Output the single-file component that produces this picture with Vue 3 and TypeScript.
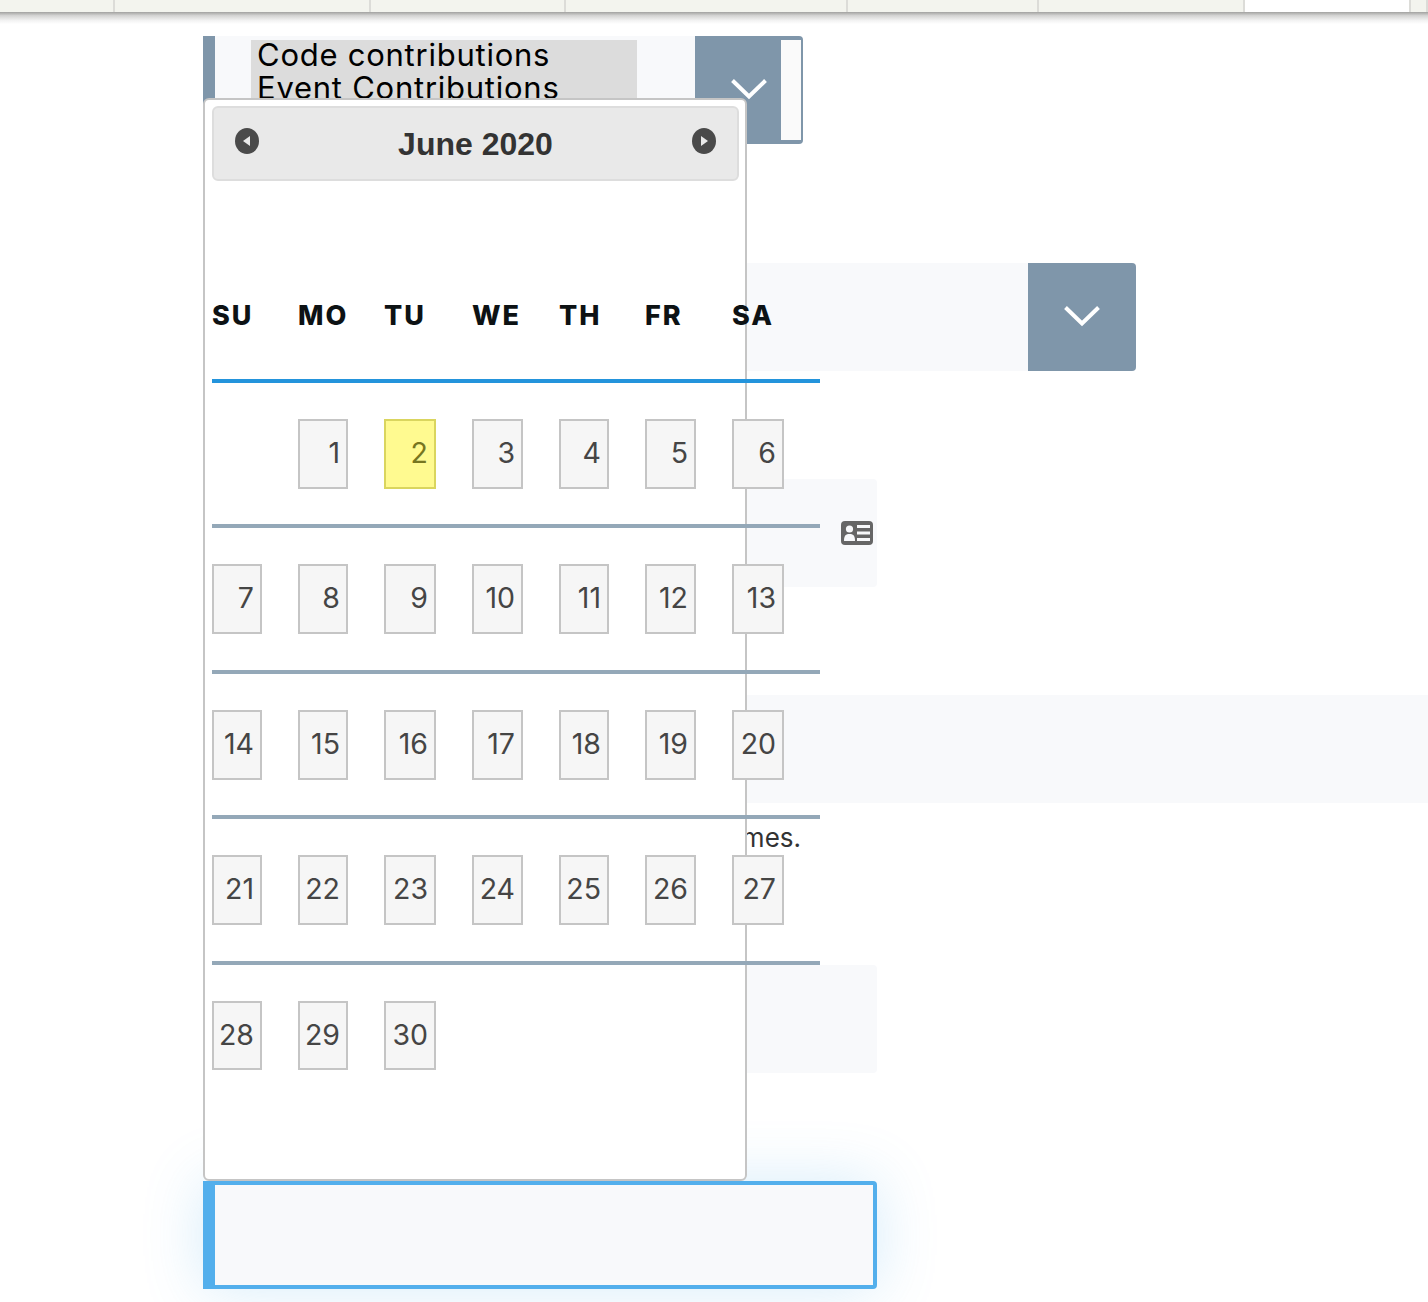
<script setup lang="ts">
const tabs = [115, 256, 195, 282, 191, 206, 166, 17]
const heads = ['SU', 'MO', 'TU', 'WE', 'TH', 'FR', 'SA']
const weeks: (number | null)[][] = [
  [null, 1, 2, 3, 4, 5, 6],
  [7, 8, 9, 10, 11, 12, 13],
  [14, 15, 16, 17, 18, 19, 20],
  [21, 22, 23, 24, 25, 26, 27],
  [28, 29, 30, null, null, null, null],
]
</script>

<template>
  <div class="page">
    <div class="tabbar">
      <div
        v-for="(w, i) in tabs"
        :key="i"
        class="tab"
        :class="{ active: i === 6 }"
        :style="{ width: w + 'px' }"
      ></div>
    </div>

    <div class="form">
      <div class="field first">
        <div class="listwrap">
          <div class="listbox">
            <div>Code contributions</div>
            <div>Event Contributions</div>
          </div>
        </div>
        <div class="arrow">
          <svg class="chev" viewBox="0 0 36 22" width="36" height="22">
            <path d="M1.5 2.5 L18 18.5 L34.5 2.5" fill="none" stroke="#fff" stroke-width="4" />
          </svg>
          <div class="scrollbar"></div>
        </div>
      </div>

      <div class="field second">
        <div class="arrow plain">
          <svg class="chev" viewBox="0 0 36 22" width="36" height="22">
            <path d="M1.5 2.5 L18 18.5 L34.5 2.5" fill="none" stroke="#fff" stroke-width="4" />
          </svg>
        </div>
      </div>

      <div class="field third">
        <svg class="card" viewBox="0 0 32 24" width="32" height="24">
          <rect width="32" height="24" rx="4" fill="#666" />
          <circle cx="8.5" cy="8" r="3.6" fill="#f8f9fb" />
          <path d="M3 20 C3 14 5 13 8.5 13 C12 13 14 14 14 20 Z" fill="#f8f9fb" />
          <rect x="16" y="4" width="13" height="3" fill="#f8f9fb" />
          <rect x="16" y="10.5" width="13" height="3" fill="#f8f9fb" />
          <rect x="16" y="17" width="13" height="3" fill="#f8f9fb" />
        </svg>
      </div>

      <div class="field fourth"></div>
      <p class="hint">names.</p>
      <div class="field fifth"></div>
      <div class="field focused"></div>
    </div>

    <div class="picker">
      <div class="header">
        <svg class="nav" viewBox="0 0 24 26" width="24" height="26">
          <ellipse cx="12" cy="13" rx="12" ry="13" fill="#4a4a4a" />
          <path d="M15 8 L8 13 L15 18 Z" fill="#e9e9e9" />
        </svg>
        <div class="title">June 2020</div>
        <svg class="nav" viewBox="0 0 24 26" width="24" height="26">
          <ellipse cx="12" cy="13" rx="12" ry="13" fill="#4a4a4a" />
          <path d="M9 8 L16 13 L9 18 Z" fill="#e9e9e9" />
        </svg>
      </div>
      <div class="calendar">
        <div class="heads row">
          <div v-for="h in heads" :key="h" class="head">{{ h }}</div>
        </div>
        <div v-for="(week, w) in weeks" :key="w" class="row week">
          <div v-for="(d, i) in week" :key="i" class="slot">
            <div v-if="d" class="day" :class="{ today: d === 2 }">{{ d }}</div>
          </div>
        </div>
      </div>
    </div>
  </div>
</template>

<style>
html, body { margin: 0; background: #fff; }
</style>

<style scoped>
.page {
  position: relative;
  width: 1428px;
  height: 1302px;
  overflow: hidden;
  background: #fff;
  font-family: Inter, "Open Sans", sans-serif;
}
.tabbar {
  display: flex;
  height: 12px;
  background: #f3f4ee;
  position: relative;
}
.tabbar::after {
  content: "";
  position: absolute;
  left: 0;
  right: 0;
  top: 12px;
  height: 12px;
  background: linear-gradient(#a2a2a0, #d4d4d3 30%, #f2f2f2 70%, #fff);
}
.tab {
  flex: none;
  box-sizing: border-box;
  height: 12px;
  border-right: 2px solid #dcdcd8;
}
.tab.active { background: #fff; }
.form { padding: 24px 0 0 203px; }
.field {
  box-sizing: border-box;
  height: 108px;
  width: 674px;
  background: #f8f9fb;
  border-radius: 0 4px 4px 0;
  display: flex;
  justify-content: flex-end;
  margin-bottom: 108px;
}
.first {
  width: 600px;
  margin-bottom: 119px;
  border-left: 12px solid #7f96aa;
  justify-content: space-between;
}
.listwrap { padding: 4px 0 0 36px; }
.listbox {
  display: flow-root;
  width: 386px;
  height: 96px;
  box-sizing: border-box;
  padding-left: 6px;
  background: #dcdcdc;
  color: #000;
  font-size: 31px;
  line-height: 33px;
  letter-spacing: 0.75px;
  white-space: nowrap;
}
.listbox div:first-child { margin-top: -2px; }
.arrow {
  position: relative;
  width: 108px;
  height: 108px;
  background: #7f96aa;
  border-radius: 0 4px 4px 0;
  display: flex;
  align-items: center;
  justify-content: center;
}
.chev { margin-top: -2px; }
.scrollbar {
  position: absolute;
  top: 4px;
  right: 2px;
  bottom: 4px;
  width: 20px;
  background: #fafafa;
}
.second { width: 933px; }
.third { align-items: center; padding-right: 4px; }
.fourth { width: 1225px; border-radius: 0; margin-bottom: 0; }
.hint {
  margin: 0;
  width: 598px;
  height: 162px;
  padding-top: 20px;
  box-sizing: border-box;
  font-size: 26px;
  line-height: 30px;
  color: #333;
  text-align: right;
  white-space: nowrap;
}
.fifth { margin-bottom: 108px; }
.focused {
  border: 4px solid #53afec;
  border-left-width: 12px;
  box-shadow: 0 0 60px rgba(83, 175, 236, 0.24);
  margin-bottom: 0;
}
.picker {
  position: absolute;
  left: 203px;
  top: 98px;
  box-sizing: border-box;
  width: 544px;
  height: 1083px;
  padding: 6px 6px 0 7px;
  background: #fff;
  border: 2px solid #c5c5c5;
  border-radius: 6px;
}
.header {
  box-sizing: border-box;
  width: 527px;
  height: 75px;
  padding: 0 21px;
  background: #e9e9e9;
  border: 2px solid #ddd;
  border-radius: 6px;
  display: flex;
  align-items: flex-start;
  justify-content: space-between;
}
.nav { margin-top: 20px; filter: blur(0.6px); }
.title {
  font-family: "Liberation Sans", Arial, sans-serif;
  font-weight: 700;
  font-size: 32px;
  line-height: 72px;
  color: #333;
}
.calendar { width: 608px; }
.row {
  display: grid;
  grid-template-columns: 86px 86px 88px 87px 86px 87px 88px;
}
.heads {
  height: 202px;
  align-items: start;
  box-sizing: border-box;
  border-bottom: 4px solid #2394dc;
}
.head {
  margin-top: 117px;
  font-size: 27px;
  line-height: 36px;
  font-weight: 800;
  letter-spacing: 2px;
  color: #0d1214;
}
.week {
  box-sizing: border-box;
  height: 145.4px;
  padding-top: 36px;
  border-bottom: 4px solid #94a8b8;
}
.week:last-child { border-bottom: 0; }
.slot { padding-right: 36px; }
.day {
  box-sizing: border-box;
  height: 69.8px;
  padding-right: 6px;
  background: #f6f6f6;
  border: 2px solid #c5c5c5;
  color: #454545;
  font-size: 28.5px;
  line-height: 63px;
  text-align: right;
  white-space: nowrap;
}
.today {
  background: #fffa90;
  border-color: #dad55e;
  color: #777620;
}
</style>
